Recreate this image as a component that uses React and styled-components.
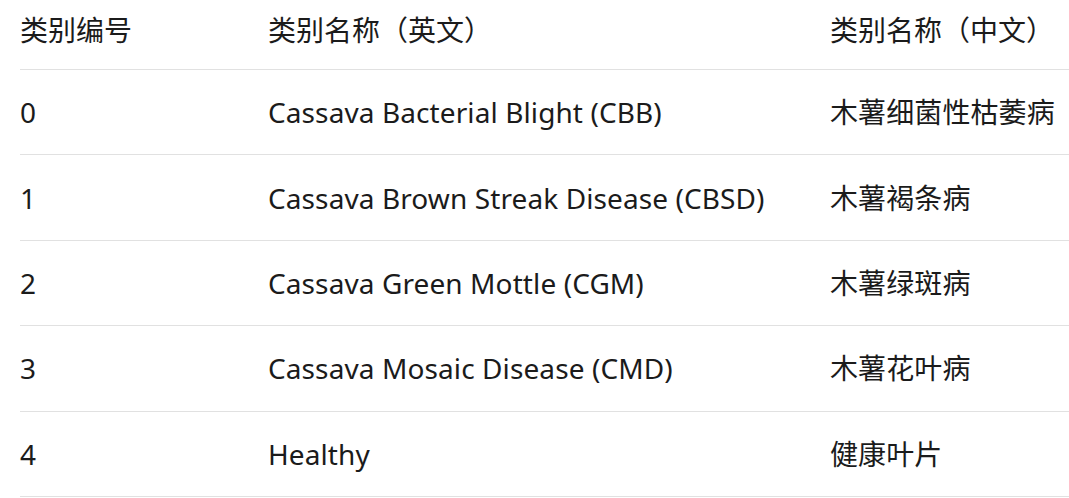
import React from "react";
import styled, { createGlobalStyle } from "styled-components";

const GlobalStyle = createGlobalStyle`
  html, body {
    margin: 0;
    background: #ffffff;
  }
  body {
    font-family: "Noto Sans", "Noto Sans CJK SC", sans-serif;
    color: #1b1b1b;
    overflow: hidden;
  }
`;

const rows = [
  { id: "0", en: "Cassava Bacterial Blight (CBB)", zh: "木薯细菌性枯萎病" },
  { id: "1", en: "Cassava Brown Streak Disease (CBSD)", zh: "木薯褐条病" },
  { id: "2", en: "Cassava Green Mottle (CGM)", zh: "木薯绿斑病" },
  { id: "3", en: "Cassava Mosaic Disease (CMD)", zh: "木薯花叶病" },
  { id: "4", en: "Healthy", zh: "健康叶片" }
];

const Wrapper = styled.div`
  padding-left: 20px;
`;

const Table = styled.table`
  border-collapse: collapse;
  width: 1049px;
  table-layout: fixed;
  font-size: 28px;
`;

const HeadCell = styled.th`
  text-align: left;
  font-weight: 400;
  height: 69px;
  padding: 0;
  vertical-align: top;
  line-height: 60px;
  border-bottom: 1px solid #e1e1e1;
  width: ${p => p.w || "auto"};
`;

const Cell = styled.td`
  padding: 0;
  height: 84.4px;
  border-bottom: 1px solid #e1e1e1;
  line-height: 36px;
  letter-spacing: 0.1px;
  white-space: nowrap;
`;

export default function App() {
  return (
    <Wrapper>
      <GlobalStyle />
      <Table>
        <thead>
          <tr>
            <HeadCell w="248px">类别编号</HeadCell>
            <HeadCell w="562px">类别名称（英文）</HeadCell>
            <HeadCell>类别名称（中文）</HeadCell>
          </tr>
        </thead>
        <tbody>
          {rows.map(r => (
            <tr key={r.id}>
              <Cell>{r.id}</Cell>
              <Cell>{r.en}</Cell>
              <Cell>{r.zh}</Cell>
            </tr>
          ))}
        </tbody>
      </Table>
    </Wrapper>
  );
}
